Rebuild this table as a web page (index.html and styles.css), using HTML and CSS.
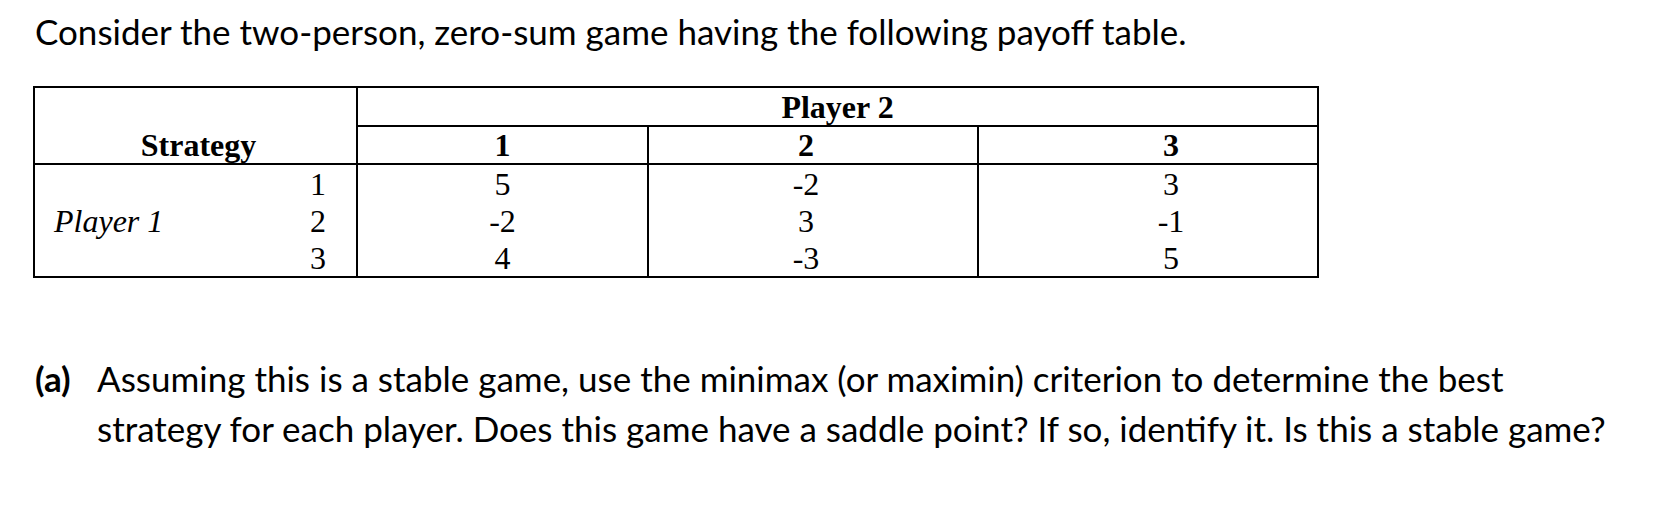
FILE: index.html
```html
<!DOCTYPE html>
<html>
<head>
<meta charset="utf-8">
<link rel="stylesheet" href="styles.css">
</head>
<body>
<p class="intro">Consider the two-person, zero-sum game having the following payoff table.</p>
<table class="payoff">
  <colgroup>
    <col class="c-label">
    <col class="c-num">
    <col class="c-1">
    <col class="c-2">
    <col class="c-3">
  </colgroup>
  <thead>
    <tr class="r-top">
      <th class="strategy" colspan="2" rowspan="2">Strategy</th>
      <th class="p2" colspan="3">Player 2</th>
    </tr>
    <tr class="r-head">
      <th class="v1">1</th>
      <th class="v2">2</th>
      <th class="v3">3</th>
    </tr>
  </thead>
  <tbody>
    <tr>
      <td class="p1" rowspan="3">Player 1</td>
      <td class="num">1</td>
      <td class="v1">5</td>
      <td class="v2">-2</td>
      <td class="v3">3</td>
    </tr>
    <tr>
      <td class="num">2</td>
      <td class="v1">-2</td>
      <td class="v2">3</td>
      <td class="v3">-1</td>
    </tr>
    <tr>
      <td class="num">3</td>
      <td class="v1">4</td>
      <td class="v2">-3</td>
      <td class="v3">5</td>
    </tr>
  </tbody>
</table>
<div class="question">
  <span class="qlabel">(a)</span>
  <p class="qtext">Assuming this is a stable game, use the minimax (or maximin) criterion to determine the best strategy for each player. Does this game have a saddle point? If so, identify it. Is this a stable game?</p>
</div>
</body>
</html>
```
FILE: styles.css
```css
html, body {
  margin: 0;
  padding: 0;
  background: #ffffff;
  color: #000000;
}
body {
  font-family: Lato, "Open Sans", sans-serif;
  font-size: 35px;
  line-height: 50px;
  padding: 0 0 0 35px;
}
.intro {
  margin: 6px 0 0 0;
  white-space: nowrap;
}
.payoff {
  margin: 30px 0 0 -2px;
  border-collapse: collapse;
  font-family: "Liberation Serif", "Times New Roman", serif;
  font-size: 32px;
  line-height: 36px;
  table-layout: fixed;
  width: 1284px;
}
.c-label { width: 211px; }
.c-num { width: 112px; }
.c-1 { width: 291px; }
.c-2 { width: 330px; }
.c-3 { width: 340px; }
.payoff th, .payoff td {
  padding: 0;
  border-left: 2px solid #000;
  border-right: 2px solid #000;
}
.payoff th {
  font-weight: bold;
  text-align: center;
}
.r-top th { border-top: 2px solid #000; height: 37px; }
.r-head th { border-top: 2px solid #000; border-bottom: 2px solid #000; height: 36px; }
.strategy {
  vertical-align: bottom;
  padding-left: 6px !important;
  border-bottom: 2px solid #000;
}
.payoff tbody td { height: 37px; text-align: center; vertical-align: middle; }
.payoff tbody tr:last-child td { border-bottom: 2px solid #000; }
.payoff td.p1 {
  font-style: italic;
  text-align: left;
  padding-left: 19px;
  border-right: none;
  border-bottom: 2px solid #000;
}
.payoff td.num {
  text-align: right;
  padding-right: 30px;
  border-left: none;
}
.payoff .v2 { padding-right: 14px; }
.payoff .v3 { padding-left: 46px; }
.question {
  display: flex;
  margin-top: 75px;
}
.qlabel {
  font-weight: bold;
  flex: 0 0 62px;
}
.qtext {
  margin: 0;
  width: 1530px;
}
```
